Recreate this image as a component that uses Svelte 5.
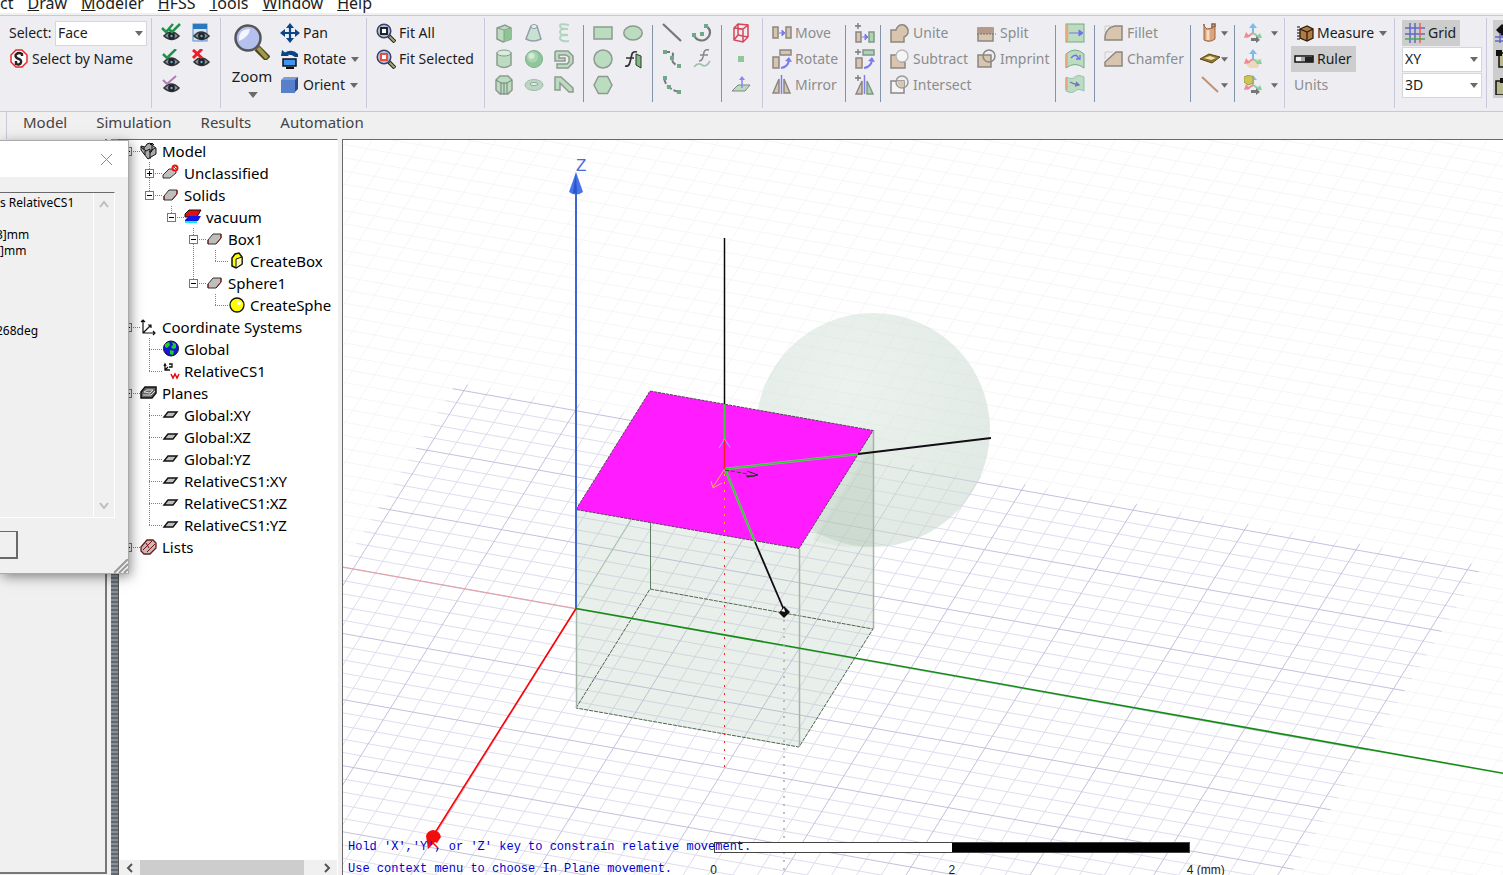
<script>
  const menus = ['Draw', 'Modeler', 'HFSS', 'Tools', 'Window', 'Help']
  const tabs = ['Model', 'Simulation', 'Results', 'Automation']

  const eye = '<path d="M3 13q7-8 15 0q-7 7-15 0z" fill="#8d9292" stroke="#333" stroke-width="1.6"/><circle cx="10.500" cy="13" r="3.400" fill="#223"/><circle cx="10.500" cy="13" r="1.200" fill="#5bb"/>'
  const lens = (inner) =>
    `<path d="M13 13l6 6" stroke="#222" stroke-width="4"/><path d="M13.500 13.500l5 5" stroke="#a9a474" stroke-width="2"/><circle cx="8" cy="8" r="6.800" fill="#b4bfe6" stroke="#3a4264" stroke-width="1.500"/><rect x="5" y="5" width="6" height="6" fill="#fff" stroke="${inner}" stroke-width="1.800"/>`
  const axes = '<path d="M9 11V3" stroke="#7cbcec" stroke-width="2"/><path d="M5 5l4-5 4 5z" fill="#7cbcec"/><path d="M9 10l-6 4" stroke="#f58792" stroke-width="2"/><path d="M0 15l2-6 4 5z" fill="#f58792"/><path d="M9 10l6 4" stroke="#82d39d" stroke-width="2"/><path d="M18 15l-6 0 4-5z" fill="#82d39d"/>'
  const g = 'fill="#bcdcc0" stroke="#8d9a90" stroke-width="1.500"'
  const t = 'fill="#d9c4ae" stroke="#8b8782" stroke-width="1.500"'
  const plus = '<path d="M0 3h6M3 0v6" stroke="#777" stroke-width="1.300"/>'

  const icons = {
    byName: '<path d="M7 1h6l5 5v7l-5 5H7l-5-5V6z" fill="#fff" stroke="#e8292c" stroke-width="1.500"/><path d="M13 7V5q-3-2-5.500 0t1 4.500q4.500 1 3.500 4t-5 1.500V12" fill="none" stroke="#222" stroke-width="2.400"/>',
    showAll: eye + '<path d="M1 5l4 4L12 1M7 5l4 4 8-8" fill="none" stroke="#20924c" stroke-width="2.500"/>',
    showSel: eye + '<path d="M2 5l4 4 9-9" fill="none" stroke="#20924c" stroke-width="2.500"/>',
    hideView: eye + '<path d="M2 5l4 4 9-8" fill="none" stroke="#b27bb8" stroke-width="2"/>',
    visTable: '<rect x="2" y="1" width="14" height="17" fill="#d5e2ef" stroke="#4f8fc9"/><rect x="2" y="1" width="14" height="5" fill="#2a79bf"/>' + eye,
    hideSel: eye + '<path d="M2 1l9 8M11 0L2 9" stroke="#ea1f27" stroke-width="3"/>',
    zoom: '<path d="M23 24l11 11" stroke="#4b451f" stroke-width="7"/><path d="M24 24l9 10" stroke="#a39a48" stroke-width="4"/><circle cx="14" cy="14" r="12.500" fill="#b5c0ee" stroke="#555" stroke-width="2.500"/><path d="M5 17Q4 5 16 5q-1 8-11 12z" fill="#f4f6ff"/>',
    pan: '<path d="M10 3v14M3 10h14" stroke="#0c4585" stroke-width="2.200"/><path d="M6 5l4-5 4 5zM6 15l4 5 4-5zM5 6l-5 4 5 4zM15 6l5 4-5 4z" fill="#0c4585"/>',
    rotate: '<path d="M4 4q8-5 14 1v3h-3q-5-4-11-1z" fill="#0c4585"/><path d="M1 7l1-6 7 6z" fill="#0c4585"/><rect x="3" y="10" width="13" height="7" fill="#3e95f5" stroke="#111" stroke-width="1.500"/><path d="M6 19h8" stroke="#111" stroke-width="2"/>',
    orient: '<path d="M1 6l4-4h13v12l-4 4H1z" fill="#2c4a85"/><path d="M1 5h14v13H1z" fill="#5680cc"/><path d="M1 5l3-3h14l-3 3z" fill="#7f9bd0"/>',
    fitAll: lens('#111'),
    fitSel: lens('#e8432a'),
    box: `<path d="M3 5l8-3 6 3v11l-8 3-6-3z" ${g}/><path d="M10 8l7-3v11l-7 3z" fill="#8cc493"/><path d="M3 5l7 2 7-2M10 7v12" fill="none" stroke="#8d9a90"/>`,
    cone: '<path d="M7 3L2 16q7 4 15 0L13 3z" fill="#c8e2d2" stroke="#8f9fae" stroke-width="1.500"/><ellipse cx="10" cy="3.500" rx="3" ry="2" fill="#eee" stroke="#8f9fae"/>',
    helix: '<path d="M15 2Q6 0 6 3t8 3Q6 5 6 9t8 3q-8-1-8 3t9 3" fill="none" stroke="#b0d4c1" stroke-width="2"/>',
    cylinder: `<path d="M3 4v12q7 5 14 0V4z" ${g}/><ellipse cx="10" cy="4" rx="7" ry="3" fill="#d9eddc" stroke="#8d9a90"/>`,
    sphere: '<circle cx="10" cy="10" r="8.500" fill="#90c69c" stroke="#7fae8a"/><circle cx="8.500" cy="8" r="5.500" fill="#abd4b3"/><circle cx="7.500" cy="7" r="3" fill="#d3ead7"/>',
    sweep: `<path d="M2 2h12l5 5v7l-5 5H3v-4h10l2-2V8l-3-2H5v3h6v3H1V3z" ${g}/>`,
    poly: `<path d="M2 5l4-4h8l4 4v10l-4 4H6l-4-4z" ${g}/><path d="M2 5l5 3h6l5-3M7 8v11M13 8v11M10 8v11" fill="none" stroke="#738078"/>`,
    torus: '<ellipse cx="10" cy="10" rx="9" ry="5.500" fill="#b9d6c3" stroke="#a4bbad"/><ellipse cx="10" cy="9" rx="4" ry="1.500" fill="#eee" stroke="#8fa698"/>',
    bend: `<path d="M1 2h6l12 11v4h-4L6 8v7H1z" ${g}/>`,
    rect: `<rect x="1" y="4" width="18" height="12" ${g}/>`,
    ellipse: `<ellipse cx="10" cy="10" rx="9.200" ry="7" ${g}/>`,
    circle: `<circle cx="10" cy="10" r="9" ${g}/>`,
    fsurf: '<path d="M2 17q4 1 5-4l2-8q1-3 5-2M3 9h8" fill="none" stroke="#333" stroke-width="1.700"/><path d="M13 5l5 2v12l-5-3z" fill="#80bb80" stroke="#333"/>',
    hexagon: `<path d="M5.500 1.500h9l4.500 8.500-4.500 8.500h-9L1 10z" ${g}/>`,
    line: '<path d="M1 1l18 17" stroke="#747678" stroke-width="2.200"/>',
    arc: '<path d="M14 3q6 4 3 10-4 6-10 4-4-1-5-6" fill="none" stroke="#747678" stroke-width="2.200"/><path d="M12 1h4v4h-4zM0 10h4v4H0zM8 9h4v4H8z" fill="#6fa98a"/>',
    spline: '<path d="M2 3h6q5 1 2 5-1 6 6 9" fill="none" stroke="#747678" stroke-width="2" stroke-dasharray="6 2"/><path d="M1 1h4v4H1zM8 7h4v4H8zM15 15h4v4h-4z" fill="#6fa98a"/>',
    fcurve: '<path d="M7 12q3 0 4-4l1-5q1-3 5-2M8 6h8" fill="none" stroke="#888" stroke-width="1.500"/><path d="M2 18q4-5 8-2t8-4" fill="none" stroke="#a0c2ac" stroke-width="1.600"/>',
    arc3: '<path d="M2 3q2 11 15 14" fill="none" stroke="#747678" stroke-width="2" stroke-dasharray="6 2"/><path d="M1 1h4v4H1zM5 10h4v4H5zM15 15h4v4h-4z" fill="#6fa98a"/>',
    region: '<path d="M3 5l4-4 10 1v12l-5 5-9-2zM3 5l9 1 5-4M12 6v13M7 1v11l-4 5M7 12l10 2" fill="none" stroke="#d6455a" stroke-width="1.500"/>',
    point: '<rect x="7" y="7" width="6" height="6" fill="#8ec896"/>',
    plane: '<path d="M1 16l6-6h12l-5 6z" fill="#bcdcc0" stroke="#7d8880"/><path d="M11 13V4" stroke="#8687f0" stroke-width="1.500"/><path d="M8 5l3-4 3 4z" fill="#8687f0"/>',
    move: `<path d="M1 4h5v11H1zM14 4h5v11h-5z" ${t}/><path d="M7 10h5M10 7l3 3-3 3z" stroke="#7b7cf0" fill="#7b7cf0"/>`,
    rotateObj: `<path d="M8 1h11v5H8zM1 8h6v11H1z" ${t}/><path d="M9 19q7-1 8-8" fill="none" stroke="#7b7cf0" stroke-width="2"/><path d="M13 12l4-4 3 5z" fill="#7b7cf0"/>`,
    mirror: `<path d="M7 4v14H1zM12 4v14h6z" ${t}/><path d="M9.500 0v19" stroke="#7b7cf0" stroke-width="1.500"/>`,
    dupLine: `<path d="M1 9h5v10H1z" ${t}/><path d="M14 9h5v10h-5z" fill="#a9d6af" stroke="#84958a" stroke-width="1.500"/><path d="M7 14h5M10 11l3 3-3 3z" stroke="#7b7cf0" fill="#7b7cf0"/>${plus}`,
    dupAxis: `<path d="M1 9h6v10H1z" ${t}/><path d="M8 1h11v5H8z" fill="#a9d6af" stroke="#84958a" stroke-width="1.500"/><path d="M9 19q7-1 8-8" fill="none" stroke="#7b7cf0" stroke-width="2"/><path d="M13 12l4-4 3 5z" fill="#7b7cf0"/>${plus}`,
    dupMirror: `<path d="M7 6v13H1z" ${t}/><path d="M12 6v13h6z" fill="#a9d6af" stroke="#84958a" stroke-width="1.500"/><path d="M9.500 0v19" stroke="#7b7cf0" stroke-width="1.500"/>${plus}`,
    unite: `<path d="M1 7h5q2-6 8-5 5 3 4 8-1 3-4 4v5H1z" ${t}/>`,
    subtract: `<path d="M1 6h10v7h4v6H1z" ${t}/><circle cx="12" cy="7" r="6" fill="#f5f5f5" stroke="#bbb" stroke-width="1.500"/>`,
    intersect: `<path d="M1 6h13v12H1z" fill="#f5f5f5" stroke="#888" stroke-width="1.500"/><path d="M7 6h7v6q-6 1-7-6z" fill="#d9c4ae"/><circle cx="12" cy="7" r="6" fill="none" stroke="#999" stroke-width="1.500"/>`,
    split: `<rect x="1" y="5" width="15" height="13" ${t}/><path d="M1 5h15v6H1z" fill="#b59a89"/><path d="M0 11h19" stroke="#777" stroke-dasharray="2 1"/>`,
    imprint: `<path d="M1 6h13v12H1z" ${t}/><circle cx="12" cy="7" r="6" fill="none" stroke="#888" stroke-width="1.500"/>`,
    sweepDir: '<rect x="1" y="1" width="18" height="18" fill="#bcdcc0" stroke="#75a985"/><path d="M2 2v16" stroke="#e8a77e" stroke-width="2.500"/><path d="M4 10h11M14 7l4 3-4 3z" fill="#7272f0" stroke="#7272f0"/>',
    sweepAxis: '<path d="M1 5q9-8 18 0v14q-9-7-18 0z" fill="#bcdcc0" stroke="#75a985"/><path d="M1.500 5v13" stroke="#e8a77e" stroke-width="2.500"/><path d="M6 9q5-6 8 1M11 10h4V6" fill="none" stroke="#7272f0" stroke-width="1.300"/>',
    sweepPath: '<path d="M1 2q6 3 9 0t9 0v14q-6-3-9 0t-9 0z" fill="#bcdcc0" stroke="#91c0b9"/><path d="M1.500 3v12" stroke="#e8a77e" stroke-width="2.500"/><path d="M5 7q5 3 8 2M11 7l3 3-4 1" fill="none" stroke="#7272c0" stroke-width="1.300"/>',
    fillet: `<path d="M1 17V13Q3 4 11 3h7v14z" ${t}/><path d="M1 10V3h7" fill="none" stroke="#ccc"/>`,
    chamfer: `<path d="M1 17v-4L12 3h6v14z" ${t}/><path d="M1 10V3h8" fill="none" stroke="#ccc"/>`,
    tube: '<path d="M4 3l3 3 6-1V3h2v13q-5 4-11 1z" fill="#dba57c" stroke="#9b623d"/><path d="M8 7v10" stroke="#f7dcc4" stroke-width="3"/><path d="M4 3V1M12 5V1h3v3" fill="none" stroke="#8b5a3c" stroke-width="1.500"/>',
    sheet: '<path d="M0 10l9-5 11 3-8 6z" fill="#8f7530" stroke="#5b481c"/><path d="M4 9l6-2 6 2-5 2z" fill="#f3e3a2"/>',
    wire: '<path d="M2 2l16 15" stroke="#c09273" stroke-width="2"/>',
    csOff: axes + '<path d="M7 15h5v-2l4 4-4 3v-2H7z" fill="#777"/>',
    csFace: '<path d="M2 16l5-6h11l-4 9H6z" fill="#ecd9bd"/>' + axes,
    csObj: axes + '<path d="M0 2l5-2 4 2v6l-5 2-4-3z" fill="#ccc65a" stroke="#a19c3f"/><path d="M7 15h5v-2l4 4-4 3v-2H7z" fill="#777"/>',
    measure: '<path d="M3 4h3M3 7h3M3 10h3M3 13h3M3 16h3" stroke="#555" stroke-width="1.300"/><path d="M6 6l7-3 6 3v9l-6 3-7-3z" fill="#b07a43" stroke="#2d2014" stroke-width="1.300"/><path d="M6 6l7 3 6-3M13 9v9" fill="none" stroke="#2d2014" stroke-width="1.300"/>',
    ruler: '<rect x="1" y="7" width="18" height="6" fill="#eee" stroke="#111" stroke-width="1.500"/><path d="M11 8h8v5h-8z" fill="#222"/><path d="M7 8h4v4H7z" fill="#aaa"/>',
    grid: '<path d="M5 0v20M10 0v20M0 5h20M0 11h20" stroke="#6068c8" stroke-width="1.500"/><path d="M15 0v20" stroke="#ef5a5a" stroke-width="1.500"/><path d="M0 16h20" stroke="#46ad4f" stroke-width="1.500"/>',
    snapGrid: '<path d="M7 1l6 6-6 6-6-6z" fill="#111"/><path d="M0 14h20M0 18h20M5 10v10" stroke="#6068c8" stroke-width="1.500"/>',
    snapVertex: '<path d="M4 4h16v14H4z" fill="#b9b78c" stroke="#111" stroke-width="1.500"/><path d="M1 1h6v6H1z" fill="#111"/>',
    snapEdge: '<path d="M1 6h18v14H1z" fill="#b9b78c" stroke="#111" stroke-width="1.500"/><path d="M5 3h6v5H5z" fill="#111"/>',
  }

  const treeIcons = {
    model: '<path d="M1 4l4 1 2-3 3-1 2 2 4 3v6l-5 3-3 2-4-5-3-4z" fill="#aaa" stroke="#111"/><path d="M1 5l5 4 4-2v10M5 9v4M12 1v8l-2 2M9 10l6-4M10 3l2-2 2 2M4 5v3" fill="none" stroke="#111"/>',
    unclassified: '<path d="M1 11l6-6h7v4l-6 5H1z" fill="#c0bdbd" stroke="#333"/><circle cx="13" cy="4" r="2.500" fill="#fff" stroke="#e11" stroke-width="2"/><path d="M11 2l4 4" stroke="#e11"/>',
    solid: '<path d="M2 10l5-6h8v4l-5 6H2z" fill="#c0bdbd" stroke="#333"/><path d="M10 14l5-6V4M2 10v4" fill="none" stroke="#7a1010"/>',
    material: '<path d="M1 6l4-4h12l-3 5-1 2H1z" fill="#e01010" stroke="#111"/><path d="M1 12l4-4h12l-3 5H1z" fill="#1018e8"/><path d="M1 13h12v2H1z" fill="#1ee"/>',
    createBox: '<path d="M4 6l3-4 4-1 3 4v7l-6 4-4-2z" fill="#ff0" stroke="#111" stroke-width="1.500"/><path d="M8 7l6-2v7l-6 4z" fill="#fffbb0" stroke="#111"/>',
    createSphere: '<circle cx="9" cy="9" r="7" fill="#ff0" stroke="#111" stroke-width="1.300"/><circle cx="11" cy="7" r="2" fill="#fff"/>',
    coords: '<path d="M3 2v13h12M3 15l8-8M1 4l2-2 2 2M13 13l2 2-2 2M8 7h3v3" fill="none" stroke="#111" stroke-width="1.200"/>',
    globe: '<circle cx="9" cy="8.500" r="7.500" fill="#1414dd" stroke="#112"/><path d="M3 4l4-2 1 3-3 3-2-1zM10 2l4 2v4l-3 1-2-2 2-2zM8 10l4 1-1 4-3-1z" fill="#17d417"/>',
    relative: '<path d="M3 3v5h5M3 8l3-3M7 2h3v3H7M2 4l1-2 1 2" fill="none" stroke="#111" stroke-width="1.300"/><path d="M9 12l2 4 2-4 2 4 2-4" fill="none" stroke="#d11" stroke-width="1.500"/>',
    planes: '<path d="M1 8l4-5h11v6l-4 5H1z" fill="#666" stroke="#111" stroke-width="1.500"/><path d="M4 8l3-2h6l-3 3zM3 11h8l4-4" fill="none" stroke="#ddd"/>',
    plane: '<path d="M2 11l4-5h9l-4 5z" fill="#c0bdbd" stroke="#111" stroke-width="1.400"/>',
    lists: '<path d="M1 9l6-7h6l3 3v5l-6 6H4l-3-3z" fill="#c9baba" stroke="#6b1a1a" stroke-width="1.300"/><path d="M3 12l9-9M7 14l8-8M6 5l3 5" stroke="#7a1010"/>',
  }

  // guides: one character per level. | through, t tee, l elbow, P/M open box with siblings below, m last
  const tree = [
    { guides: 'M', icon: 'model', label: 'Model' },
    { guides: ' P', icon: 'unclassified', label: 'Unclassified' },
    { guides: ' m', icon: 'solid', label: 'Solids' },
    { guides: '  m', icon: 'material', label: 'vacuum' },
    { guides: '   M', icon: 'solid', label: 'Box1' },
    { guides: '   |l', icon: 'createBox', label: 'CreateBox' },
    { guides: '   m', icon: 'solid', label: 'Sphere1' },
    { guides: '    l', icon: 'createSphere', label: 'CreateSphe' },
    { guides: 'M', icon: 'coords', label: 'Coordinate Systems' },
    { guides: ' t', icon: 'globe', label: 'Global' },
    { guides: ' l', icon: 'relative', label: 'RelativeCS1' },
    { guides: 'M', icon: 'planes', label: 'Planes' },
    { guides: ' t', icon: 'plane', label: 'Global:XY' },
    { guides: ' t', icon: 'plane', label: 'Global:XZ' },
    { guides: ' t', icon: 'plane', label: 'Global:YZ' },
    { guides: ' t', icon: 'plane', label: 'RelativeCS1:XY' },
    { guides: ' t', icon: 'plane', label: 'RelativeCS1:XZ' },
    { guides: ' l', icon: 'plane', label: 'RelativeCS1:YZ' },
    { guides: 'm', icon: 'lists', label: 'Lists' },
  ]

  function guideLine(c, depth) {
    if (depth === 1) return ''
    return '|tPM'.includes(c) ? 'M10.5 0V22' : 'M10.5 0V11'
  }

  // floor grid, in steps along y (k) and x (m) from the origin
  const at = (k, m) => [233 + 22.3 * k - 7.4 * m, 469 + 3.98 * k + 11.9 * m]
  const seg = (a, b) => `M${at(...a).map((n) => n.toFixed(1))}L${at(...b).map((n) => n.toFixed(1))}`

  function gridPath(k0, k1, m0, m1, over, keep) {
    let d = ''
    for (let k = k0; k <= k1; k++) if (keep(k)) d += seg([k, m0 - over], [k, m1 + over])
    for (let m = m0; m <= m1; m++) if (keep(m)) d += seg([k0 - over, m], [k1 + over, m])
    return d
  }

  const far = gridPath(-40, 80, -70, 60, 0, () => true)
  const minor = gridPath(-10, 35, -15, 30, 0.5, (n) => n % 5 !== 0)
  const major = gridPath(-10, 35, -15, 30, 0.5, (n) => n % 5 === 0)
  const floorArea = 'M' + [at(-10.5, -15.5), at(35.5, -15.5), at(35.5, 30), at(-10.5, 30)].join('L') + 'z'

  let pick = $state('Face')
  let gridOn = $state(true)
  let rulerOn = $state(true)
  let dialogOpen = $state(true)
</script>

{#snippet icon(name)}
  <svg class="icon" viewBox="0 0 20 20" aria-hidden="true">{@html icons[name]}</svg>
{/snippet}

{#snippet caret()}
  <svg class="caret" viewBox="0 0 8 5" aria-hidden="true"><path d="M0 0h8L4 5z" /></svg>
{/snippet}

{#snippet tools(names)}
  {#each names as name}
    <button class="tool" aria-label={name}>{@render icon(name)}</button>
  {/each}
{/snippet}

{#snippet labelled(name, text, drop)}
  <button class="labelled" aria-label={text || name}>
    {@render icon(name)}{#if text}<span>{text}</span>{/if}{#if drop}{@render caret()}{/if}
  </button>
{/snippet}

<div class="app">
  <nav class="menu">
    <span class="cut">ct</span>
    {#each menus as m}
      <button><u>{m[0]}</u>{m.slice(1)}</button>
    {/each}
  </nav>

  <div class="ribbon">
    <div class="group select">
      <div class="field">
        <label for="pick">Select:</label>
        <span class="combo">
          <select id="pick" bind:value={pick}><option>Face</option><option>Object</option></select>
          {@render caret()}
        </span>
      </div>
      {@render labelled('byName', 'Select by Name')}
    </div>
    <i class="sep"></i>
    <div class="group icons">
      {@render tools(['showAll', 'showSel', 'hideView', 'visTable', 'hideSel'])}
    </div>
    <i class="sep"></i>
    <div class="group zoom">
      <button class="big">
        <svg viewBox="0 0 36 36" aria-hidden="true">{@html icons.zoom}</svg>
        <span>Zoom</span>
        {@render caret()}
      </button>
      {@render labelled('pan', 'Pan')}
      {@render labelled('rotate', 'Rotate', true)}
      {@render labelled('orient', 'Orient', true)}
    </div>
    <i class="sep"></i>
    <div class="group fit">
      {@render labelled('fitAll', 'Fit All')}
      {@render labelled('fitSel', 'Fit Selected')}
    </div>
    <i class="sep"></i>
    <div class="group icons">
      {@render tools(['box', 'cylinder', 'poly', 'cone', 'sphere', 'torus', 'helix', 'sweep', 'bend'])}
    </div>
    <i class="sep dark"></i>
    <div class="group icons">
      {@render tools(['rect', 'circle', 'hexagon', 'ellipse', 'fsurf'])}
    </div>
    <i class="sep dark"></i>
    <div class="group icons">
      {@render tools(['line', 'spline', 'arc3', 'arc', 'fcurve'])}
    </div>
    <i class="sep dark"></i>
    <div class="group icons wide">
      {@render tools(['region', 'point', 'plane'])}
    </div>
    <i class="sep"></i>
    <div class="group off move">
      {@render labelled('move', 'Move')}
      {@render labelled('rotateObj', 'Rotate')}
      {@render labelled('mirror', 'Mirror')}
    </div>
    <i class="sep dark"></i>
    <div class="group icons tight">
      {@render tools(['dupLine', 'dupAxis', 'dupMirror'])}
    </div>
    <i class="sep dark"></i>
    <div class="group off boolean">
      {@render labelled('unite', 'Unite')}
      {@render labelled('subtract', 'Subtract')}
      {@render labelled('intersect', 'Intersect')}
      {@render labelled('split', 'Split')}
      {@render labelled('imprint', 'Imprint')}
    </div>
    <i class="sep dark"></i>
    <div class="group icons">
      {@render tools(['sweepDir', 'sweepAxis', 'sweepPath'])}
    </div>
    <i class="sep dark"></i>
    <div class="group off fillet">
      {@render labelled('fillet', 'Fillet')}
      {@render labelled('chamfer', 'Chamfer')}
    </div>
    <i class="sep dark"></i>
    <div class="group surface">
      {@render labelled('tube', '', true)}
      {@render labelled('sheet', '', true)}
      {@render labelled('wire', '', true)}
    </div>
    <i class="sep dark"></i>
    <div class="group cs">
      {@render labelled('csOff', '', true)}
      {@render labelled('csFace', '')}
      {@render labelled('csObj', '', true)}
    </div>
    <i class="sep"></i>
    <div class="group measure">
      {@render labelled('measure', 'Measure', true)}
      <button class="labelled toggle" class:on={rulerOn} onclick={() => (rulerOn = !rulerOn)}>
        {@render icon('ruler')}<span>Ruler</span>
      </button>
      <button class="labelled units" disabled>Units</button>
    </div>
    <i class="sep"></i>
    <div class="group view">
      <button class="labelled toggle" class:on={gridOn} onclick={() => (gridOn = !gridOn)}>
        {@render icon('grid')}<span>Grid</span>
      </button>
      <span class="combo">
        <select aria-label="Drawing plane"><option>XY</option><option>YZ</option><option>XZ</option></select>
        {@render caret()}
      </span>
      <span class="combo">
        <select aria-label="Movement mode"><option>3D</option><option>In Plane</option></select>
        {@render caret()}
      </span>
    </div>
    <i class="sep"></i>
    <div class="group snap">
      {@render tools(['snapGrid', 'snapVertex', 'snapEdge'])}
    </div>
  </div>

  <nav class="tabs">
    {#each tabs as tab}
      <button>{tab}</button>
    {/each}
  </nav>

  <main>
    <div class="side"></div>
    <div class="splitter"></div>

    <section class="tree">
      <ul>
        {#each tree as row}
          <li>
            {#each row.guides as c}
              <svg class="guide" viewBox="0 0 22 22" aria-hidden="true">
                {#if c !== ' '}
                  <path class="dots" d={guideLine(c, row.guides.length)} />
                  {#if c !== '|'}<path class="dots" d="M10 11.500H24" />{/if}
                  {#if 'PMm'.includes(c)}
                    <rect x="6.500" y="7.500" width="8" height="8" />
                    <path class="mark" d={c === 'P' ? 'M8 11.500h5M10.500 9v5' : 'M8 11.500h5'} />
                  {/if}
                {/if}
              </svg>
            {/each}
            <svg class="node" viewBox="0 0 18 18" aria-hidden="true">{@html treeIcons[row.icon]}</svg>
            <span>{row.label}</span>
          </li>
        {/each}
      </ul>
      <div class="hscroll">
        <button aria-label="Scroll left"><svg viewBox="0 0 8 10"><path d="M6 1L2 5l4 4" /></svg></button>
        <div class="track"><div class="thumb"></div></div>
        <button aria-label="Scroll right"><svg viewBox="0 0 8 10"><path d="M2 1l4 4-4 4" /></svg></button>
      </div>
    </section>

    <section class="canvas">
      <svg class="scene" aria-label="3D model view" role="img">
        <defs>
          <radialGradient id="ball" cx="0.4" cy="0.3" r="0.8">
            <stop offset="0" stop-color="#dce9e0" />
            <stop offset="1" stop-color="#c6d6cc" />
          </radialGradient>
        </defs>
        {#if gridOn}
          <path d={far} stroke="#f6f6f6" />
          <path d={floorArea} fill="#fff" />
          <path d={minor} stroke="#dfddee" />
          <path d={major} stroke="#c3c1dc" />
        {/if}
        <g transform="translate(-343 -140)">
          <circle cx="873" cy="430" r="117" fill="url(#ball)" fill-opacity="0.55" />
          <path d="M343 567L576 608.500" stroke="#eaa0a0" />
          <path d="M576 608.500L643 500" stroke="#a5cda5" />
          <path d="M576 509L799 548L873 430V629L799 747L576 708z" fill="#adc4b1" fill-opacity="0.27" />
          <path d="M813 540L873 443V547Q842 549 813 540z" fill="#a9c0ad" fill-opacity="0.15" />
          <path d="M650.500 391V589" stroke="#5e7d63" />
          <path d="M576 708L650 589L873 629L799 747z" stroke="#4e6452" stroke-dasharray="4 1" />
          <path d="M799.500 549V747M873.500 430V629M576.500 609V708" stroke="#a6b3a9" stroke-width="1.500" />
          <path d="M576 608.500L1603 791" stroke="#128c12" stroke-width="1.600" />
          <path d="M576 608.500L433 836" stroke="#f00" stroke-width="1.600" />
          <path d="M426 836q1-5 7-6 7 1 8 7l-4 6-2-1-7 7z" fill="#f00d0d" />
          <path d="M432 842l6 6" stroke="#f00d0d" stroke-width="1.500" />
          <path d="M576 509.500L650 391L873 430.500L799 548.500z" fill="#ff1cff" stroke="#574259" stroke-dasharray="3 1" />
          <path d="M576 608V190" stroke="#3f62d4" stroke-width="2" />
          <path d="M576 172L569 192q7 5 14 0z" fill="#4674ec" />
          <path d="M573 193l3-20 1 21z" fill="#2c55c8" />
          <path d="M724.500 238V404" stroke="#0a0a0a" stroke-width="1.500" />
          <path d="M724.500 404V440" stroke="#40cb30" stroke-width="2" />
          <path d="M724.500 440V469" stroke="#f32020" stroke-width="1.500" />
          <path d="M719 448l5.500-9 6 9" stroke="#7fb6ff" />
          <path d="M858 454L991 438M755 542L784 610" stroke="#140c14" stroke-width="1.800" />
          <path d="M725 469L858 454M725 469L755 542" stroke="#b8a0b4" stroke-width="2.500" />
          <path d="M725 469L858 454M725 469L755 542" stroke="#1fd81f" stroke-width="1.500" />
          <path d="M725 470L748 474" stroke="#151" stroke-dasharray="4 2" />
          <path d="M747 471l11 4-11 2M746 476h9" stroke="#063f06" />
          <path d="M724 470L713 487M711 481l2 7 9-5" stroke="#ffb060" />
          <path d="M724.500 474V538" stroke="#fc0" stroke-dasharray="2 6" />
          <path d="M724.500 541V768" stroke="#f22" stroke-dasharray="2 6" />
          <path d="M784 620V1200" stroke="#aaa" stroke-width="1.500" stroke-dasharray="2 6" />
          <path d="M784 606l6 6-6 6-5-5z" fill="#111" />
          <path d="M781 611l3-3 1 4z" fill="#fff" />
          <text x="576" y="171">Z</text>
        </g>
      </svg>
      {#if rulerOn}
        <div class="scale">
          <div class="bar"></div>
          <div class="ticks"><span>0</span><span>2</span><span class="unit">4 (mm)</span></div>
        </div>
      {/if}
      <div class="hint">
        <p>Hold 'X','Y', or 'Z' key to constrain relative movement.</p>
        <p>Use context menu to choose In Plane movement.</p>
      </div>
    </section>

    {#if dialogOpen}
      <div class="dialog" role="dialog" aria-label="Measure Data">
        <header>
          <button aria-label="Close" onclick={() => (dialogOpen = false)}>
            <svg viewBox="0 0 13 13"><path d="M1 1l11 11M12 1L1 12" /></svg>
          </button>
        </header>
        <div class="output">
          <div class="lines">
            <p>s RelativeCS1</p>
            <p></p>
            <p class="cut">3]mm</p>
            <p>]mm</p>
            <p></p>
            <p></p>
            <p></p>
            <p></p>
            <p class="cut">268deg</p>
          </div>
          <div class="vscroll">
            <svg viewBox="0 0 10 8"><path d="M1 7l4-5 4 5" /></svg>
            <svg viewBox="0 0 10 8"><path d="M1 1l4 5 4-5" /></svg>
          </div>
        </div>
        <button class="ok" aria-label="OK"></button>
        <svg class="grip" viewBox="0 0 14 14" aria-hidden="true"><path d="M0 14L14 0M5 14l9-9M10 14l4-4" /></svg>
      </div>
    {/if}
  </main>
</div>

<style>
  :global(body) {
    margin: 0;
    overflow: hidden;
  }

  .app {
    display: flex;
    flex-direction: column;
    height: 100vh;
    overflow: hidden;
    background: #f0f0f0;
    color: #1c1c1c;
    font: 14px/20px 'Noto Sans', 'Open Sans', sans-serif;
  }

  button {
    padding: 0;
    border: 0;
    background: none;
    color: inherit;
    font: inherit;
  }

  svg {
    display: block;
    flex: none;
  }

  p,
  ul {
    margin: 0;
    padding: 0;
  }

  .menu {
    display: flex;
    align-items: flex-end;
    gap: 14px;
    height: 13px;
    flex: none;
    overflow: hidden;
    background: #fff;
    font-size: 16px;
  }

  .menu .cut,
  .menu button {
    height: 20px;
    line-height: 20px;
  }

  .ribbon {
    display: flex;
    flex: none;
    height: 95px;
    margin-top: 2px;
    border-top: 1px solid #c9c8da;
    border-bottom: 1px solid #c9c8da;
    background: #eeeef2;
    overflow: hidden;
  }

  .sep {
    flex: none;
    width: 1px;
    margin: 2px 0 3px;
    background: #c9c8dc;
  }

  .sep.dark {
    margin: 9px 0;
    background: #8393a9;
  }

  .group {
    display: grid;
    grid-template-rows: repeat(3, 26px);
    grid-auto-flow: column;
    align-content: start;
    justify-content: start;
    flex: none;
    box-sizing: border-box;
    padding: 4px 0 0 9px;
  }

  .off {
    color: #8c8c8c;
  }

  .icons {
    grid-auto-columns: 30px;
    margin-right: -1px;
  }

  .select { width: 151px; }
  .zoom { width: 145px; padding-left: 11px; grid-template-columns: 48px; }
  .fit { width: 117px; }
  .wide { width: 41px; }
  .move { width: 82px; }
  .tight { width: 35px; }
  .boolean { width: 174px; grid-template-columns: 87px; }
  .fillet { width: 95px; }
  .surface { width: 43px; }
  .cs { width: 49px; }
  .measure { width: 109px; }
  .view { width: 91px; padding-left: 7px; }
  .snap { padding-left: 6px; }

  .icon {
    width: 20px;
    height: 20px;
  }

  .caret {
    width: 8px;
    height: 5px;
    fill: #6a6a6a;
  }

  .tool,
  .labelled {
    display: flex;
    align-items: center;
    height: 26px;
  }

  .labelled {
    gap: 3px;
    white-space: nowrap;
  }

  .zoom .caret,
  .measure .caret {
    margin-left: 2px;
  }

  .surface .labelled {
    gap: 1px;
  }

  .surface .caret,
  .cs .caret {
    width: 7px;
  }

  .cs .labelled {
    gap: 7px;
  }

  .toggle {
    justify-self: start;
    margin-left: -3px;
    padding: 0 4px 0 3px;
  }

  .view .toggle {
    margin-left: 0;
  }

  .toggle.on {
    background: #cdcdcd;
  }

  .units {
    color: #8c8c8c;
  }

  .snap .tool {
    width: 24px;
    padding-left: 2px;
    background: #cdcdcd;
  }

  .field {
    display: flex;
    align-items: center;
    gap: 3px;
  }

  .field label {
    width: 43px;
  }

  .combo {
    display: grid;
    align-items: center;
    width: 80px;
  }

  .field .combo {
    width: 92px;
  }

  .combo select {
    grid-area: 1 / 1;
    width: 100%;
    height: 25px;
    padding: 0 0 0 2px;
    border: 1px solid #d5d5dc;
    border-radius: 0;
    background: #fff;
    color: inherit;
    font: inherit;
    appearance: none;
  }

  .combo .caret {
    grid-area: 1 / 1;
    justify-self: end;
    margin-right: 4px;
    pointer-events: none;
  }

  .big {
    grid-row: span 3;
    display: flex;
    flex-direction: column;
    align-items: center;
    justify-self: start;
    width: 40px;
    padding-top: 4px;
    font-size: 15px;
  }

  .big > svg:first-child {
    width: 36px;
    height: 36px;
  }

  .big span {
    margin-top: 6px;
  }

  .big .caret {
    width: 12px;
    height: 6px;
    margin: 6px 0 0 2px;
  }

  .tabs {
    display: flex;
    gap: 29px;
    flex: none;
    height: 27px;
    margin-left: 6px;
    padding-left: 16px;
    border-left: 1px solid #c9c8da;
    color: #444;
    font-size: 15px;
  }

  .tabs button {
    height: 20px;
  }

  main {
    position: relative;
    display: flex;
    flex: 1;
    min-height: 0;
  }

  .side {
    width: 107px;
    margin-bottom: 1px;
    border-right: 2px solid #777;
    border-bottom: 2px solid #777;
    box-sizing: border-box;
    flex: none;
  }

  .splitter {
    width: 7px;
    margin-left: 4px;
    border-right: 1px solid #555;
    background: repeating-linear-gradient(#8b9097 0 2px, #606972 2px 4px);
    flex: none;
  }

  .tree {
    display: flex;
    flex-direction: column;
    flex: none;
    width: 218px;
    border-top: 1px solid #696969;
    border-right: 1px solid #fff;
    background: #fff;
    overflow: hidden;
  }

  .tree ul {
    flex: 1;
    min-height: 0;
    margin-left: -2px;
    list-style: none;
    overflow: hidden;
    font-size: 15px;
  }

  .tree li {
    display: flex;
    align-items: center;
    height: 22px;
    line-height: 22px;
    white-space: nowrap;
    color: #000;
  }

  .guide {
    width: 22px;
    height: 22px;
    overflow: visible;
    shape-rendering: crispEdges;
  }

  .guide rect {
    fill: #fff;
    stroke: #777;
  }

  .guide .mark {
    stroke: #000;
  }

  .guide .dots {
    stroke: #808080;
    stroke-dasharray: 1 1;
  }

  .node {
    width: 18px;
    height: 18px;
    margin: 0 4px 0 1px;
    z-index: 1;
  }

  .hscroll {
    display: flex;
    flex: none;
    height: 15px;
    background: #f0f0f0;
  }

  .hscroll button {
    display: grid;
    place-items: center;
    width: 21px;
  }

  .hscroll svg {
    width: 8px;
    height: 10px;
    fill: none;
    stroke: #555;
    stroke-width: 2;
  }

  .track {
    flex: 1;
  }

  .thumb {
    width: 93%;
    height: 100%;
    background: #cdcdcd;
  }

  .canvas {
    position: relative;
    flex: 1;
    min-width: 0;
    margin-left: 4px;
    border-top: 1px solid #696969;
    border-left: 1px solid #696969;
    background: #fff;
    overflow: hidden;
  }

  .scene {
    width: 100%;
    height: 100%;
    fill: none;
  }

  .scene text {
    fill: #4a6ad8;
    font: 17px 'Liberation Sans', sans-serif;
  }

  .scale {
    position: absolute;
    left: 32%;
    bottom: -3px;
    width: 41%;
    color: #222;
    font: 12px/16px 'Liberation Sans', sans-serif;
  }

  .bar {
    height: 9px;
    border: 1px solid #444;
    background: linear-gradient(90deg, #fff 50%, #000 50%);
  }

  .ticks {
    display: flex;
    justify-content: space-between;
    margin: 9px -4px 0;
  }

  .ticks .unit {
    width: 7px;
    white-space: nowrap;
  }

  .hint {
    position: absolute;
    left: 5px;
    bottom: -5px;
    color: #00c;
    font: 12px/22px 'Liberation Mono', monospace;
    white-space: nowrap;
  }

  .dialog {
    position: absolute;
    top: 2px;
    left: 0;
    display: flex;
    flex-direction: column;
    width: 128px;
    height: 432px;
    background: #f0f0f0;
    box-shadow: 0 0 0 1px #aaa, 2px 3px 12px rgba(0, 0, 0, 0.5);
    z-index: 2;
  }

  .dialog header {
    display: flex;
    align-items: center;
    justify-content: flex-end;
    height: 36px;
    padding-right: 15px;
    background: #fff;
  }

  .dialog header svg {
    width: 13px;
    height: 13px;
    stroke: #888;
  }

  .output {
    display: flex;
    justify-content: space-between;
    width: 114px;
    height: 324px;
    margin-top: 15px;
    border-top: 1px solid #696969;
    border-right: 1px solid #fff;
    border-bottom: 1px solid #fff;
    overflow: hidden;
    color: #000;
    font-size: 12px;
    line-height: 16px;
  }

  .lines {
    padding-top: 2px;
    white-space: nowrap;
  }

  .lines p {
    height: 16px;
  }

  .lines .cut {
    margin-left: -4px;
  }

  .vscroll {
    display: flex;
    flex-direction: column;
    align-items: center;
    justify-content: space-between;
    width: 20px;
    padding: 7px 0;
    border-left: 1px solid #fff;
  }

  .vscroll svg {
    width: 10px;
    height: 8px;
    fill: none;
    stroke: #bbb;
    stroke-width: 2;
  }

  .ok {
    width: 18px;
    height: 28px;
    margin-top: 13px;
    border: solid #696969;
    border-width: 1px 2px 2px 0;
    background: #f0f0f0;
  }

  .grip {
    width: 14px;
    height: 14px;
    margin: auto 0 0 auto;
    stroke: #999;
    stroke-width: 2;
  }
</style>
